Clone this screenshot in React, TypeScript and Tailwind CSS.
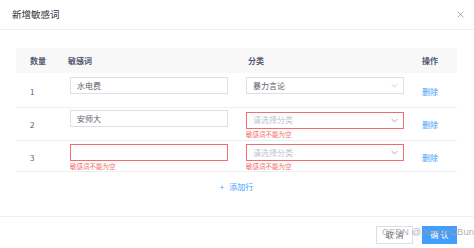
import { useState } from "react";

type Row = {
  word: string;
  category: string;
  wordError?: boolean;
  categoryError?: boolean;
  pt: number;
  pb: number;
};

const rows: Row[] = [
  { word: "水电费", category: "暴力言论", pt: 4, pb: 13 },
  { word: "安师大", category: "", categoryError: true, pt: 2, pb: 13 },
  { word: "", category: "", wordError: true, categoryError: true, pt: 3, pb: 11 },
];

const Chevron = ({ color }: { color: string }) => (
  <svg width="7" height="5" viewBox="0 0 10 6" fill="none">
    <path d="M1 1l4 4 4-4" stroke={color} strokeWidth="1.2" />
  </svg>
);

const ErrorText = () => (
  <p className="h-[10px] pt-[1px] text-[6.5px] leading-[9px] text-[#f56c6c]">敏感词不能为空</p>
);

const App = () => {
  const [data] = useState<Row[]>(rows);

  return (
    <div
      className="relative w-[474px] h-[248px] bg-white text-[8px] text-[#606266] overflow-hidden"
      style={{ fontFamily: '"Noto Sans CJK SC", "Noto Sans", sans-serif' }}
    >
      <div className="flex h-[30px] items-center justify-between border-b border-[#eeeff2] pl-[12px] pr-[10px]">
        <p className="text-[9.5px] text-[#303133]">新增敏感词</p>
        <svg width="7" height="7" viewBox="0 0 10 10" className="mb-[1px]">
          <path d="M1 1l8 8M9 1l-8 8" stroke="#909399" strokeWidth="1.1" />
        </svg>
      </div>

      <div className="pt-[18px] pl-[16px] pr-[17px]">
        <div className="grid h-[25px] grid-cols-[47px_176px_176px_1fr] items-center bg-[#f8f8f9] font-bold text-[#515a6e]">
          <p className="pl-[14px]">数量</p>
          <p className="pl-[5px]">敏感词</p>
          <p className="pl-[9px]">分类</p>
          <p className="pl-[7px]">操作</p>
        </div>

        {data.map((row, i) => (
          <div
            key={i}
            className="grid grid-cols-[47px_176px_176px_1fr] items-center border-b border-[#ebeef5]"
            style={{ paddingTop: row.pt }}
          >
            <p className="pl-[14px]">{i + 1}</p>
            <div className="pl-[7px]" style={{ paddingBottom: row.wordError ? 0 : row.pb }}>
              <div
                className={`flex h-[17px] w-[158px] items-center border px-[6px] ${
                  row.wordError ? "border-[#f56c6c]" : "border-[#dcdfe6]"
                }`}
              >
                {row.word}
              </div>
              {row.wordError && <ErrorText />}
            </div>
            <div className="pl-[7px]" style={{ paddingBottom: row.categoryError ? 0 : row.pb }}>
              <div
                className={`flex h-[17px] w-[158px] items-center justify-between border pl-[6px] pr-[5px] ${
                  row.categoryError ? "border-[#f56c6c]" : "border-[#dcdfe6]"
                }`}
              >
                <span className={row.category ? "" : "text-[#c0c4cc]"}>
                  {row.category || "请选择分类"}
                </span>
                <Chevron color={row.categoryError ? "#f56c6c" : "#c0c4cc"} />
              </div>
              {row.categoryError && <ErrorText />}
            </div>
            <p className="pl-[7px] text-[#409eff]">删除</p>
          </div>
        ))}

        <div className="flex h-[44px] justify-center pt-[9px] text-[#409eff]">
          <p>
            <span className="mr-[5px]">+</span>添加行
          </p>
        </div>
      </div>

      <div className="flex justify-end gap-[9px] border-t border-[#eeeff2] pt-[9px] pr-[17px]">
        <button className="flex h-[18px] w-[37px] items-center justify-center border border-[#dcdfe6] bg-white text-[#606266]">
          取 消
        </button>
        <button className="flex h-[18px] w-[35px] items-center justify-center bg-[#409eff] text-white">
          确 认
        </button>
      </div>

      <p
        className="absolute left-[382px] top-[225px] text-[9.5px] text-[#9a9a9a]/80"
        style={{ fontFamily: '"Liberation Sans", sans-serif' }}
      >
        CSDN @JerryInDBun
      </p>
    </div>
  );
};

export default App;
